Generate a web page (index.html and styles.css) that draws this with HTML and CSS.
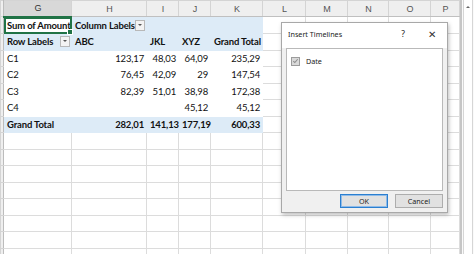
FILE: index.html
```html
<!DOCTYPE html>
<html>
<head>
    <meta charset="UTF-8">
    <title>Insert Timelines</title>
    <link rel="stylesheet" href="styles.css">
</head>
<body>
    <div class="workbook">
        <table class="sheet">
            <colgroup>
                <col style="width:3px">
                <col style="width:68px">
                <col style="width:75px">
                <col style="width:32px">
                <col style="width:32px">
                <col style="width:52px">
                <col style="width:43px">
                <col style="width:42px">
                <col style="width:41px">
                <col style="width:42px">
                <col style="width:29px">
            </colgroup>
            <tr class="colHeads">
                <th class="stub"></th>
                <th class="active">G</th>
                <th>H</th>
                <th>I</th>
                <th>J</th>
                <th>K</th>
                <th>L</th>
                <th>M</th>
                <th>N</th>
                <th>O</th>
                <th class="right">P</th>
            </tr>
            <tr>
                <td class="stub"></td>
                <td class="pv bold sel">Sum of Amount</td>
                <td class="pv head bold">
                    <div class="lbl"><span>Column Labels</span><span class="dd"></span></div>
                </td>
                <td class="pv head"></td>
                <td class="pv head"></td>
                <td class="pv head"></td>
                <td></td><td></td><td></td><td></td><td></td>
            </tr>
            <tr>
                <td class="stub"></td>
                <td class="pv head bold">
                    <div class="lbl"><span>Row Labels</span><span class="dd"></span></div>
                </td>
                <td class="pv head bold">ABC</td>
                <td class="pv head bold">JKL</td>
                <td class="pv head bold">XYZ</td>
                <td class="pv head bold">Grand Total</td>
                <td></td><td></td><td></td><td></td><td></td>
            </tr>
            <tr>
                <td class="stub"></td>
                <td class="pv">C1</td>
                <td class="pv num">123,17</td>
                <td class="pv num">48,03</td>
                <td class="pv num">64,09</td>
                <td class="pv num">235,29</td>
                <td></td><td></td><td></td><td></td><td></td>
            </tr>
            <tr>
                <td class="stub"></td>
                <td class="pv">C2</td>
                <td class="pv num">76,45</td>
                <td class="pv num">42,09</td>
                <td class="pv num">29</td>
                <td class="pv num">147,54</td>
                <td></td><td></td><td></td><td></td><td></td>
            </tr>
            <tr>
                <td class="stub"></td>
                <td class="pv">C3</td>
                <td class="pv num">82,39</td>
                <td class="pv num">51,01</td>
                <td class="pv num">38,98</td>
                <td class="pv num">172,38</td>
                <td></td><td></td><td></td><td></td><td></td>
            </tr>
            <tr>
                <td class="stub"></td>
                <td class="pv">C4</td>
                <td class="pv num"></td>
                <td class="pv num"></td>
                <td class="pv num">45,12</td>
                <td class="pv num">45,12</td>
                <td></td><td></td><td></td><td></td><td></td>
            </tr>
            <tr class="total">
                <td class="stub"></td>
                <td class="pv bold">Grand Total</td>
                <td class="pv num bold">282,01</td>
                <td class="pv num bold">141,13</td>
                <td class="pv num bold">177,19</td>
                <td class="pv num bold">600,33</td>
                <td></td><td></td><td></td><td></td><td></td>
            </tr>
            <tr><td class="stub"></td><td></td><td></td><td></td><td></td><td></td><td></td><td></td><td></td><td></td><td></td></tr>
            <tr><td class="stub"></td><td></td><td></td><td></td><td></td><td></td><td></td><td></td><td></td><td></td><td></td></tr>
            <tr><td class="stub"></td><td></td><td></td><td></td><td></td><td></td><td></td><td></td><td></td><td></td><td></td></tr>
            <tr><td class="stub"></td><td></td><td></td><td></td><td></td><td></td><td></td><td></td><td></td><td></td><td></td></tr>
            <tr><td class="stub"></td><td></td><td></td><td></td><td></td><td></td><td></td><td></td><td></td><td></td><td></td></tr>
            <tr><td class="stub"></td><td></td><td></td><td></td><td></td><td></td><td></td><td></td><td></td><td></td><td></td></tr>
            <tr><td class="stub"></td><td></td><td></td><td></td><td></td><td></td><td></td><td></td><td></td><td></td><td></td></tr>
            <tr><td class="stub"></td><td></td><td></td><td></td><td></td><td></td><td></td><td></td><td></td><td></td><td></td></tr>
        </table>

        <div class="vscroll">
            <div class="track">
                <div class="arrowUp"></div>
            </div>
        </div>

        <div class="dialog">
            <div class="titleBar">
                <span class="title">Insert Timelines</span>
                <span class="help">?</span>
                <span class="close">&#x2715;</span>
            </div>
            <div class="fieldList">
                <label class="field">
                    <span class="check">
                        <svg width="8" height="8" viewBox="0 0 8 8">
                            <path d="M1.5 4.2 L3.2 5.8 L6.5 2" fill="none" stroke="#8a8a8a" stroke-width="1.2"/>
                        </svg>
                    </span>
                    Date
                </label>
            </div>
            <div class="buttons">
                <button class="btn ok">OK</button>
                <button class="btn">Cancel</button>
            </div>
            <div class="grip"></div>
        </div>
    </div>
</body>
</html>
```

FILE: styles.css
```css
body {
    margin: 0;
    padding: 0;
    background-color: #fff;
    font-family: Lato, "Liberation Sans", sans-serif;
    overflow: hidden;
}

.workbook {
    position: relative;
    display: flex;
    width: 474px;
    height: 254px;
    overflow: hidden;
}

.sheet {
    border-collapse: collapse;
    table-layout: fixed;
    width: 459px;
    font-size: 9.5px;
    letter-spacing: -0.15px;
    color: #111;
}

.sheet td,
.sheet th {
    height: 15.5px;
    padding: 0 2px 0 3px;
    border: 1px solid #dcdcdc;
    white-space: nowrap;
}

.colHeads th {
    height: 14.5px;
    background-color: #efefef;
    border-color: #d4d4d4;
    border-bottom-color: #c0c0c0;
    font-family: "Liberation Sans", sans-serif;
    font-weight: normal;
    font-size: 9px;
    letter-spacing: 0;
    color: #555;
    text-align: center;
}

.colHeads th.active {
    background-color: #d8d8d8;
    border-bottom: 2px solid #217346;
    color: #333;
}

.sheet .stub {
    padding: 0;
    background-color: #efefef;
    border-color: #d4d4d4;
    border-right-color: #bcbcbc;
}

.sheet td.pv {
    border-color: #fff;
    background-color: #fff;
}

.sheet td.pv.head {
    background-color: #ddebf7;
    border-color: #ddebf7;
}

.total td.pv {
    background-color: #ddebf7;
    border-color: #ddebf7;
    border-top: 1px solid #9bc2e6;
}

.bold {
    font-weight: bold;
}

.num {
    text-align: right;
}

.sheet td.sel {
    position: relative;
    outline: 2px solid #217346;
    outline-offset: -2px;
    background-color: #fff;
}

.sheet td.sel::after {
    content: "";
    position: absolute;
    right: -2px;
    bottom: -2px;
    width: 4px;
    height: 4px;
    background-color: #217346;
    border: 1px solid #fff;
}

.lbl {
    display: flex;
    align-items: center;
    justify-content: space-between;
}

.dd {
    display: inline-block;
    position: relative;
    width: 8px;
    height: 9px;
    background-color: #f3f3f3;
    border: 1px solid #b8b8b8;
    margin-right: -1px;
}

.dd::after {
    content: "";
    position: absolute;
    left: 2px;
    top: 3px;
    border-left: 2px solid transparent;
    border-right: 2px solid transparent;
    border-top: 2px solid #555;
}

.vscroll {
    width: 15px;
    border-left: 2px solid #c6c6c6;
    background-color: #fafafa;
}

.track {
    width: 8px;
    height: 100%;
    margin-left: 1px;
    border-left: 1px solid #d6d6d6;
    border-right: 1px solid #d6d6d6;
    background-color: #fff;
}

.arrowUp {
    height: 14px;
    position: relative;
}

.arrowUp::after {
    content: "";
    position: absolute;
    left: 2px;
    top: 6px;
    border-left: 2px solid transparent;
    border-right: 2px solid transparent;
    border-bottom: 2px solid #666;
}

.dialog {
    position: absolute;
    left: 281px;
    top: 22px;
    width: 165px;
    height: 189px;
    background-color: #f0f0f0;
    border: 1px solid #a8a8a8;
    box-shadow: 1px 2px 4px rgba(0, 0, 0, 0.25);
    font-family: "Noto Sans", "Open Sans", sans-serif;
    font-size: 7.2px;
    color: #222;
}

.titleBar {
    display: flex;
    align-items: center;
    height: 21px;
    padding: 0 9px 4px 6px;
    background-color: #fff;
}

.title {
    flex: 1;
}

.help {
    width: 12px;
    margin-right: 17px;
    text-align: center;
    font-size: 8.5px;
}

.close {
    width: 12px;
    text-align: center;
    font-size: 10px;
    color: #333;
}

.fieldList {
    margin: 0 4px;
    height: 141px;
    background-color: #fff;
    border: 1px solid #b9b9b9;
}

.field {
    display: flex;
    align-items: center;
    gap: 6px;
    padding: 7px 0 0 4px;
}

.check {
    display: inline-flex;
    align-items: center;
    justify-content: center;
    width: 7px;
    height: 7px;
    border: 1px solid #9c9c9c;
    background-color: #d9d9d9;
}

.buttons {
    display: flex;
    justify-content: flex-end;
    gap: 7px;
    margin: 3px 4px 0 0;
}

.btn {
    width: 48px;
    height: 14px;
    padding: 0;
    font-family: "Noto Sans", "Open Sans", sans-serif;
    font-size: 7.2px;
    color: #222;
    background-color: #e1e1e1;
    border: 1px solid #adadad;
}

.btn.ok {
    border: 1px solid #2b7fd0;
    box-shadow: inset 0 0 0 1px #8fbbe8;
}

.grip {
    position: absolute;
    right: 1px;
    bottom: 1px;
    width: 4px;
    height: 4px;
    background-image: radial-gradient(#9a9a9a 30%, transparent 35%);
    background-size: 2px 2px;
}
```
